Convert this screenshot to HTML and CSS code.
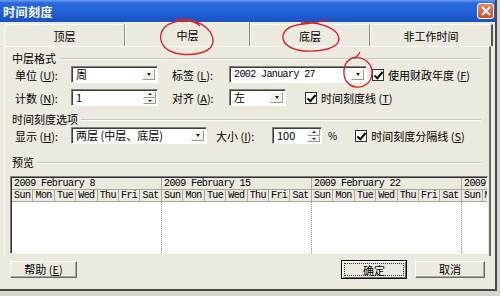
FILE: index.html
```html
<!DOCTYPE html>
<html lang="zh-CN">
<head>
    <meta charset="UTF-8">
    <title>时间刻度</title>
    <link rel="stylesheet" href="styles.css">
</head>
<body>
    <div class="dialog">
        <!-- Title bar -->
        <div class="titlebar">
            <span class="title">时间刻度</span>
            <span class="close-btn">
                <svg width="10" height="10" viewBox="0 0 10 10"><path d="M1 1L9 9M9 1L1 9" stroke="#fff" stroke-width="2"/></svg>
            </span>
        </div>

        <!-- Tabs -->
        <div class="tabs">
            <div class="tab t1">顶层</div>
            <div class="tab t2 active">中层</div>
            <div class="tab t3">底层</div>
            <div class="tab t4">非工作时间</div>
        </div>

        <div class="panel">
            <div class="group-title"><span>中层格式</span></div>
            <div class="row">
                <span class="lbl">单位 (<u>U</u>):</span>
                <div class="field w87"><span class="val">周</span><span class="drop"></span></div>
                <span class="lbl lbl2">标签 (<u>L</u>):</span>
                <div class="field w138"><span class="val mono">2002 January 27</span><span class="drop"></span></div>
                <span class="check c1"></span>
                <span class="check-text">使用财政年度 (<u>F</u>)</span>
            </div>
            <div class="row">
                <span class="lbl">计数 (<u>N</u>):</span>
                <div class="field w87"><span class="val">1</span><span class="spin"><i class="up"></i><i class="down"></i></span></div>
                <span class="lbl lbl2">对齐 (<u>A</u>):</span>
                <div class="field w57"><span class="val">左</span><span class="drop"></span></div>
                <span class="check c2"></span>
                <span class="check-text">时间刻度线 (<u>T</u>)</span>
            </div>

            <div class="group-title gt2"><span>时间刻度选项</span></div>
            <div class="row">
                <span class="lbl">显示 (<u>H</u>):</span>
                <div class="field w136"><span class="val">两层 (中层、底层)</span><span class="drop"></span></div>
                <span class="lbl lbl3">大小 (<u>I</u>):</span>
                <div class="field w50"><span class="val">100</span><span class="spin"><i class="up"></i><i class="down"></i></span></div>
                <span class="pct">%</span>
                <span class="check c3"></span>
                <span class="check-text">时间刻度分隔线 (<u>S</u>)</span>
            </div>

            <div class="group-title gt3"><span>预览</span></div>
            <div class="preview">
                <div class="week">
                    <div class="week-head">2009 February 8</div>
                    <div class="days"><span>Sun</span><span>Mon</span><span>Tue</span><span>Wed</span><span>Thu</span><span>Fri</span><span>Sat</span></div>
                    <div class="week-body"></div>
                </div>
                <div class="week">
                    <div class="week-head">2009 February 15</div>
                    <div class="days"><span>Sun</span><span>Mon</span><span>Tue</span><span>Wed</span><span>Thu</span><span>Fri</span><span>Sat</span></div>
                    <div class="week-body"></div>
                </div>
                <div class="week">
                    <div class="week-head">2009 February 22</div>
                    <div class="days"><span>Sun</span><span>Mon</span><span>Tue</span><span>Wed</span><span>Thu</span><span>Fri</span><span>Sat</span></div>
                    <div class="week-body"></div>
                </div>
                <div class="week week-last">
                    <div class="week-head">2009</div>
                    <div class="days"><span>Sun</span><span>M</span></div>
                    <div class="week-body"></div>
                </div>
            </div>
        </div>

        <!-- Buttons -->
        <div class="footer">
            <button class="btn btn-help">帮助 (<u>E</u>)</button>
            <div class="footer-right">
                <button class="btn btn-ok"><span class="focus">确定</span></button>
                <button class="btn btn-cancel">取消</button>
            </div>
        </div>
    </div>

    <!-- Hand drawn red marks -->
    <svg class="marks" width="500" height="296" viewBox="0 0 500 296">
        <path d="M176 20 C196 17 212 28 213 40 C214 52 196 56 180 54 C166 52 159 44 161 34 C163 26 170 22 181 21 C190 20 196 22 200 26" fill="none" stroke="#d42828" stroke-width="1.4"/>
        <path d="M301 23 C322 21 339 30 339 39 C339 48 322 52 305 51 C291 50 282 44 283 36 C284 29 292 25 304 24 C315 23 322 22 327 19" fill="none" stroke="#d42828" stroke-width="1.4"/>
        <path d="M353 58 C364 56 373 64 372 74 C371 83 364 88 356 87 C348 86 343 79 344 70 C345 62 350 58 356 57 C358 56 359 54 360 52" fill="none" stroke="#d42828" stroke-width="1.4"/>
    </svg>
</body>
</html>
```

FILE: styles.css
```css
/* Global */
* {
    box-sizing: border-box;
}

body {
    margin: 0;
    width: 500px;
    height: 296px;
    overflow: hidden;
    position: relative;
    background: #d8d6cc;
    font-family: "Noto Sans CJK SC", "Liberation Sans", sans-serif;
    font-size: 11px;
    color: #000;
}

.dialog {
    width: 497px;
    height: 291px;
    background: #ece9df;
    border-right: 2px solid #4a4a4a;
    border-bottom: 2px solid #4a4a4a;
}

/* Title bar */
.titlebar {
    height: 22px;
    display: flex;
    align-items: center;
    justify-content: space-between;
    padding: 0 1px 0 3px;
    background: linear-gradient(to bottom, #6b9ef0 0, #2c68dc 3px, #2160d6 12px, #1a52c4 22px);
}

.title {
    color: #fff;
    font-weight: bold;
    font-size: 12px;
    letter-spacing: 0.5px;
}

.close-btn {
    width: 17px;
    height: 16px;
    display: flex;
    align-items: center;
    justify-content: center;
    border: 1px solid #fff;
    border-radius: 3px;
    background: linear-gradient(to bottom, #e8876a, #cc4a26);
}

/* Tabs */
.tabs {
    display: flex;
    height: 24px;
    padding: 2px 0 0 4px;
}

.tab {
    display: flex;
    align-items: center;
    justify-content: center;
    height: 22px;
    border-top: 1px solid #fff;
    border-left: 1px solid #fff;
    border-right: 1px solid #8a8a84;
}

.t1 { width: 121px; }
.t2 { width: 125px; }
.t3 { width: 120px; }
.t4 { width: 123px; border-right: 2px solid #555; }

.tab.active {
    margin-top: -2px;
    height: 24px;
}

/* Panel */
.panel {
    margin: 0 4px 0 4px;
    height: 210px;
    padding: 5px 5px 0 5px;
    border-left: 1px solid #fff;
    border-top: 1px solid #fff;
    border-right: 2px solid #6a6a66;
}

.group-title {
    display: flex;
    align-items: center;
    height: 13px;
    margin: 0 3px 1px 2px;
    line-height: 13px;
}

.group-title::after {
    content: "";
    flex: 1;
    margin-left: 3px;
    border-top: 1px solid #c8c6bc;
    border-bottom: 1px solid #fff;
}

.gt2 { margin-top: 7px; }
.gt3 { margin-top: 12px; margin-bottom: 7px; }

.row {
    display: flex;
    align-items: center;
    height: 17px;
    padding-left: 5px;
}

.row + .row {
    margin-top: 6px;
}

.lbl {
    width: 56px;
    flex: none;
    white-space: nowrap;
}

.lbl2 { margin-left: 14px; width: 57px; }
.lbl3 { margin-left: 9px; }

u {
    text-decoration: underline;
}

/* Inputs */
.field {
    flex: none;
    display: flex;
    height: 17px;
    background: #fff;
    border-top: 1px solid #808080;
    border-left: 1px solid #808080;
    border-right: 1px solid #fff;
    border-bottom: 1px solid #fff;
    box-shadow: inset 1px 1px 0 #404040;
}

.w87 { width: 87px; }
.w138 { width: 138px; }
.w57 { width: 57px; }
.w136 { width: 136px; }
.w50 { width: 50px; }

.val {
    flex: 1;
    padding: 0 0 0 4px;
    line-height: 15px;
    white-space: nowrap;
    overflow: hidden;
}

.mono {
    font-family: "Liberation Mono", monospace;
    font-size: 10px;
    letter-spacing: -0.6px;
}

.drop {
    width: 13px;
    margin: 2px 2px 2px 0;
    background: #f2f1ea;
    border-top: 1px solid #fff;
    border-left: 1px solid #fff;
    border-right: 1px solid #9a9a94;
    border-bottom: 1px solid #9a9a94;
    display: flex;
    align-items: center;
    justify-content: center;
}

.drop::after {
    content: "";
    border-top: 3px solid #222;
    border-left: 2px solid transparent;
    border-right: 2px solid transparent;
}

.spin {
    width: 13px;
    margin: 1px 1px 1px 0;
    display: flex;
    flex-direction: column;
}

.spin i {
    flex: 1;
    display: flex;
    align-items: center;
    justify-content: center;
    background: #f2f1ea;
    border-top: 1px solid #fff;
    border-left: 1px solid #fff;
    border-right: 1px solid #9a9a94;
    border-bottom: 1px solid #9a9a94;
}

.spin .up::after {
    content: "";
    border-bottom: 2px solid #222;
    border-left: 2px solid transparent;
    border-right: 2px solid transparent;
}

.spin .down::after {
    content: "";
    border-top: 2px solid #222;
    border-left: 2px solid transparent;
    border-right: 2px solid transparent;
}

.pct {
    margin-left: 6px;
    font-size: 10px;
}

/* Checkboxes */
.check {
    flex: none;
    width: 12px;
    height: 12px;
    background: #fff;
    border: 1px solid #333;
    position: relative;
}

.check::after {
    content: "";
    position: absolute;
    left: 3px;
    top: 0px;
    width: 3px;
    height: 7px;
    border-right: 2px solid #000;
    border-bottom: 2px solid #000;
    transform: rotate(40deg);
}

.c1 { margin-left: 5px; }
.c2 { margin-left: 19px; }
.c3 { margin-left: 18px; }

.check-text {
    margin-left: 4px;
    white-space: nowrap;
}

/* Preview */
.preview {
    display: flex;
    width: 478px;
    height: 78px;
    overflow: hidden;
    background: #fff;
    border-top: 1px solid #808080;
    border-left: 1px solid #808080;
    border-right: 1px solid #fff;
    border-bottom: 1px solid #fff;
    box-shadow: inset 1px 1px 0 #303030;
    padding: 1px 0 0 1px;
    font-family: "Liberation Mono", monospace;
    font-size: 10px;
    letter-spacing: -0.6px;
}

.week {
    flex: none;
    width: 150px;
    display: flex;
    flex-direction: column;
}

.week-last {
    width: 26px;
}

.week-head {
    height: 12px;
    line-height: 12px;
    padding-left: 2px;
    background: #ece9df;
    border-right: 1px solid #a8a8a0;
    border-bottom: 1px solid #a8a8a0;
    white-space: nowrap;
}

.week-last .week-head {
    border-right: none;
}

.days {
    display: flex;
    height: 12px;
    background: #ece9df;
    border-bottom: 1px solid #a8a8a0;
}

.days span {
    flex: none;
    width: 21.4px;
    line-height: 11px;
    text-align: center;
    border-right: 1px solid #a8a8a0;
    overflow: hidden;
}

.days span:last-child {
    flex: 1;
}

.week-last .days span:last-child {
    border-right: none;
    text-align: left;
    padding-left: 1px;
}

.week-body {
    flex: 1;
    border-right: 1px dotted #8c8c8c;
}

.week-last .week-body {
    border-right: none;
}

/* Footer buttons */
.footer {
    display: flex;
    justify-content: space-between;
    padding: 5px 10px 0 10px;
}

.footer-right {
    display: flex;
    gap: 8px;
}

.btn {
    font-family: "Noto Sans CJK SC", sans-serif;
    font-size: 11px;
    height: 17px;
    padding: 0;
    line-height: 13px;
    background: #ece9df;
    color: #000;
    border-top: 1px solid #fff;
    border-left: 1px solid #fff;
    border-right: 1px solid #6a6a66;
    border-bottom: 1px solid #6a6a66;
    box-shadow: inset -1px -1px 0 #a8a8a0;
}

.btn-help { width: 67px; }
.btn-cancel { width: 70px; }

.btn-ok {
    width: 66px;
    height: 19px;
    margin-top: -1px;
    border: 1px solid #000;
    box-shadow: inset 1px 1px 0 #fff, inset -1px -1px 0 #6a6a66;
    padding: 2px;
}

.btn-ok .focus {
    display: block;
    height: 13px;
    border: 1px dotted #333;
}

/* Red marks drawn over the dialog */
.marks {
    position: absolute;
    left: 0;
    top: 0;
    pointer-events: none;
}
```
